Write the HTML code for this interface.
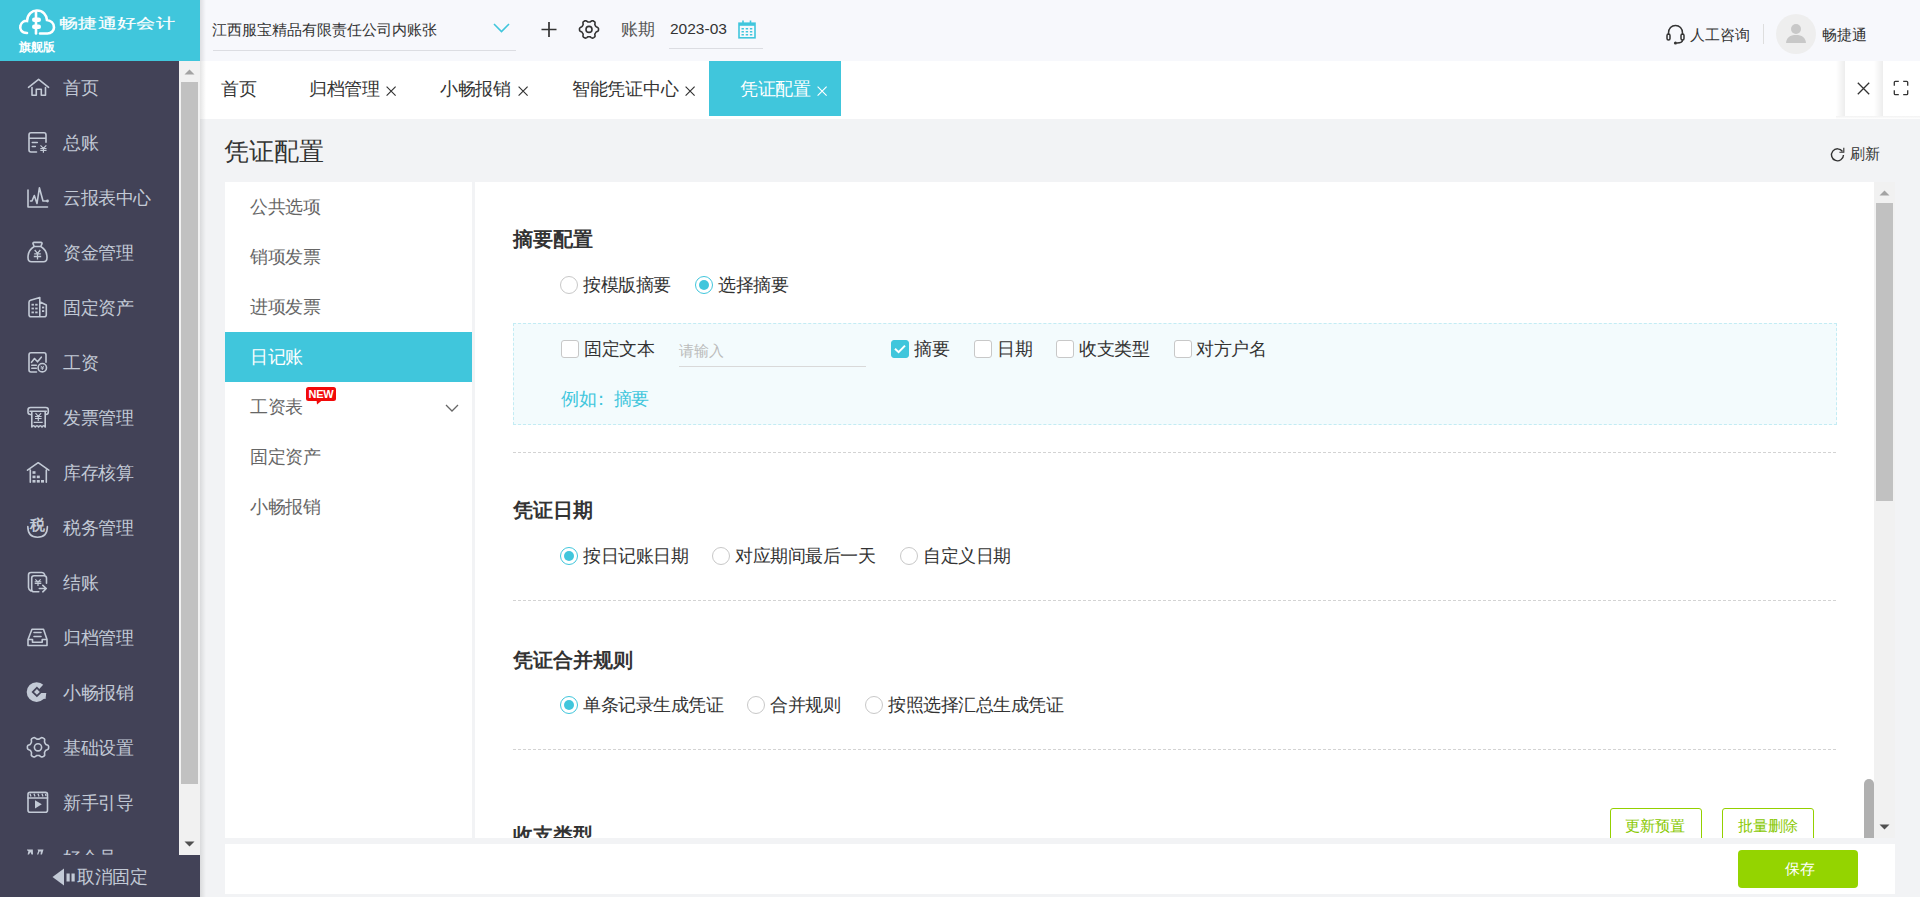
<!DOCTYPE html>
<html><head><meta charset="utf-8">
<style>
*{box-sizing:border-box;margin:0;padding:0}
html,body{width:1920px;height:897px;overflow:hidden}
body{position:relative;background:#f2f3f5;font-family:"Liberation Sans",sans-serif;color:#333}
.a{position:absolute}
.t{position:absolute;white-space:nowrap;line-height:1}
svg{position:absolute;overflow:visible}
/* logo */
#logo{left:0;top:0;width:200px;height:61px;background:#40c6dc}
/* sidebar */
#side{left:0;top:61px;width:200px;height:836px;background:#424257}
.mi{position:absolute;left:63px;font-size:18px;letter-spacing:-0.5px;color:#c3cad6;line-height:1;white-space:nowrap}
.sb{position:absolute;background:#f1f1f1}
.thumb{position:absolute;background:#c1c1c1}
/* header */
#hdr{left:200px;top:0;width:1720px;height:61px;background:#f7f8fc}
#tabs{left:200px;top:61px;width:1720px;height:58px;background:#fff}
.tab{position:absolute;top:80px;font-size:18px;letter-spacing:-0.3px;color:#333;line-height:1;white-space:nowrap}
.x{position:absolute}
.panel{position:absolute;background:#fff}
.nav{position:absolute;left:250px;font-size:18px;letter-spacing:-0.5px;color:#666;line-height:1;white-space:nowrap}
.h2{position:absolute;left:513px;font-size:20px;font-weight:bold;color:#333;line-height:1;white-space:nowrap}
.lbl{position:absolute;font-size:18px;letter-spacing:-0.5px;color:#333;line-height:1;white-space:nowrap}
.radio{position:absolute;width:18px;height:18px;border:1px solid #c8c8c8;border-radius:50%;background:#fff}
.radio.on{border-color:#40c6dc}
.radio.on::after{content:"";position:absolute;left:3px;top:3px;width:10px;height:10px;border-radius:50%;background:#40c6dc}
.cb{position:absolute;width:18px;height:18px;border:1px solid #c8c8c8;border-radius:3px;background:#fff}
.dash{position:absolute;left:513px;width:1324px;height:1px;background:repeating-linear-gradient(90deg,#d3d3d3 0 3px,transparent 3px 5px)}
</style></head><body>
<div id="logo" class="a"></div>
<!-- cloud logo -->
<svg style="left:0;top:0" width="200" height="61" viewBox="0 0 200 61">
  <g fill="none" stroke="#fff" stroke-width="2.6" stroke-linecap="round">
    <path d="M27 33 C21 33 19.5 28.5 20.5 25.5 C21.5 22 24.5 20.5 27 21 C27.5 14 32 10.5 37 10.5 C43 10.5 46.5 15 47 20 C50.5 20.5 54 23 54 27.5 C54 31 51 33.5 47.5 33.5 L40 33.5"/>
    <path d="M36 11 L36 33.5"/>
  </g>
  <g fill="#fff">
    <rect x="32" y="17.5" width="9" height="4.5" rx="2.2"/>
    <rect x="32" y="24.5" width="9" height="4.5" rx="2.2"/>
  </g>
</svg>
<div class="t" style="left:59px;top:17px;font-size:13.5px;-webkit-text-stroke:0.2px #fff;color:#fff;transform-origin:0 0;transform:scaleX(1.36);letter-spacing:0.2px">畅捷通好会计</div>
<div class="t" style="left:19px;top:41px;font-size:12px;color:#fff;font-weight:bold">旗舰版</div>

<div id="side" class="a"></div>
<div class="sb" style="left:179px;top:61px;width:21px;height:794px"></div>
<div class="thumb" style="left:181px;top:82px;width:17px;height:702px"></div>
<svg style="left:184px;top:69px" width="11" height="6"><path d="M0.5 5.5 L5.5 0.5 L10.5 5.5 Z" fill="#a3a3a3"/></svg>
<svg style="left:184px;top:841px" width="11" height="6"><path d="M0.5 0.5 L5.5 5.5 L10.5 0.5 Z" fill="#505050"/></svg>
<div class="mi" style="top:79px">首页</div>
<div class="mi" style="top:134px">总账</div>
<div class="mi" style="top:189px">云报表中心</div>
<div class="mi" style="top:244px">资金管理</div>
<div class="mi" style="top:299px">固定资产</div>
<div class="mi" style="top:354px">工资</div>
<div class="mi" style="top:409px">发票管理</div>
<div class="mi" style="top:464px">库存核算</div>
<div class="mi" style="top:519px">税务管理</div>
<div class="mi" style="top:574px">结账</div>
<div class="mi" style="top:629px">归档管理</div>
<div class="mi" style="top:684px">小畅报销</div>
<div class="mi" style="top:739px">基础设置</div>
<div class="mi" style="top:794px">新手引导</div>
<div class="mi" style="top:849px">好会员</div>

<svg style="left:24px;top:74px" width="30" height="30" viewBox="0 0 30 30"><path fill="none" stroke="#c3cad6" stroke-width="1.6" stroke-linecap="round" stroke-linejoin="round" d="M4.5 13.3 L14.6 5.3 L24.6 13.3 M8 13.5 V21.3 H12.3 V15.3 H17.3 V21.3 H21.5 V13.5"/></svg>
<svg style="left:24px;top:129px" width="30" height="30" viewBox="0 0 30 30"><path fill="none" stroke="#c3cad6" stroke-width="1.6" stroke-linecap="round" stroke-linejoin="round" d="M12.5 23 H7 Q5 23 5 21 V6 Q5 3.8 7 3.8 H20 Q22 3.8 22 6 V13.3 M5 9.3 H22 M8.3 13.5 H13.3 M8.3 17.5 H11.3"/><path fill="none" stroke="#c3cad6" stroke-width="1.2" d="M16.5 16.3 L19.4 19.3 L22.3 16.3 M16.3 19.6 H22.5 M16.3 21.5 H22.5 M19.4 19.3 V23.8"/></svg>
<svg style="left:24px;top:184px" width="30" height="30" viewBox="0 0 30 30"><path fill="none" stroke="#c3cad6" stroke-width="1.6" stroke-linecap="round" stroke-linejoin="round" d="M4 6 V23 H23.5 M6.5 17 H8 L10.3 11.5 L13 19.5 L15.4 3.8 L19 17 H23"/><circle cx="23.5" cy="17" r="1.4" fill="#c3cad6"/></svg>
<svg style="left:24px;top:239px" width="30" height="30" viewBox="0 0 30 30"><path fill="none" stroke="#c3cad6" stroke-width="1.6" stroke-linecap="round" stroke-linejoin="round" d="M10.2 7.5 L9 4.6 Q8.8 3.4 10 3.4 H17 Q18.2 3.4 18 4.6 L16.8 7.5 Z M10.2 7.5 Q4 11 4 18.5 Q4 22.8 7.5 22.8 H19.5 Q23 22.8 23 18.5 Q23 11 16.8 7.5"/><path fill="none" stroke="#c3cad6" stroke-width="1.3" d="M10.7 11 L13.5 14.3 L16.3 11 M10.2 14.8 H16.8 M9.8 17.5 H17.2 M13.5 14.3 V20.5"/></svg>
<svg style="left:24px;top:294px" width="30" height="30" viewBox="0 0 30 30"><path fill="none" stroke="#c3cad6" stroke-width="1.6" stroke-linecap="round" stroke-linejoin="round" d="M15.8 3.6 L6.5 6.3 Q5 6.8 5 8.3 V20.8 Q5 22.8 7 22.8 H20.3 Q22.3 22.8 22.3 20.8 V11 L16.2 8 M15.8 3.6 V22.8"/><g fill="#c3cad6"><rect x="7.5" y="9.8" width="2.4" height="1.8"/><rect x="11.2" y="9.8" width="2.4" height="1.8"/><rect x="7.5" y="13.6" width="2.4" height="1.8"/><rect x="11.2" y="13.6" width="2.4" height="1.8"/><rect x="7.5" y="17.5" width="2.4" height="1.8"/><rect x="11.2" y="17.5" width="2.4" height="1.8"/><rect x="18" y="12.6" width="2.2" height="1.8"/><rect x="18" y="16.2" width="2.2" height="1.8"/></g></svg>
<svg style="left:24px;top:349px" width="30" height="30" viewBox="0 0 30 30"><path fill="none" stroke="#c3cad6" stroke-width="1.6" stroke-linecap="round" stroke-linejoin="round" d="M12.5 23 H7 Q5 23 5 21 V6 Q5 3.8 7 3.8 H20 Q22 3.8 22 6 V13.3 M7.5 13.3 L10.5 9.5 L13.5 12.8 L17.3 8.2 M7.8 16.3 H12.3 M7.8 19.3 H12.3"/><circle cx="18.3" cy="18.7" r="4.2" fill="none" stroke="#c3cad6" stroke-width="1.6" stroke-linecap="round" stroke-linejoin="round"/><path fill="none" stroke="#c3cad6" stroke-width="1" d="M16.7 16.8 L18.3 18.6 L19.9 16.8 M16.6 19 H20 M18.3 18.6 V21"/></svg>
<svg style="left:24px;top:404px" width="30" height="30" viewBox="0 0 30 30"><path fill="none" stroke="#c3cad6" stroke-width="1.6" stroke-linecap="round" stroke-linejoin="round" d="M6.5 10.5 Q4 10.5 4 8 V6 Q4 3.5 6.5 3.5 H21.8 Q24.3 3.5 24.3 6 V8 Q24.3 10.5 21.8 10.5 M6 7.3 H22.3 M7.8 7.5 V23 Q9.5 20.5 11.3 23 Q13 20.5 14.6 23 Q16.3 20.5 18 23 Q19.6 20.5 21.2 23 V7.5"/><path fill="none" stroke="#c3cad6" stroke-width="1.2" d="M11.5 9.2 L14.3 12.3 L17.1 9.2 M11 12.5 H17.6 M11 14.5 H17.6 M14.3 12.3 V17 M9.7 18.4 H18.7"/></svg>
<svg style="left:24px;top:459px" width="30" height="30" viewBox="0 0 30 30"><path fill="none" stroke="#c3cad6" stroke-width="1.6" stroke-linecap="round" stroke-linejoin="round" d="M3.5 11.2 L14.2 3.7 L24.8 11.2 M6.3 11 V23.3 M22.3 11 V23.3"/><g fill="#c3cad6"><rect x="8.5" y="12.2" width="3" height="2.6"/><rect x="8.5" y="16.6" width="3" height="2.6"/><rect x="12.8" y="16.6" width="3" height="2.6"/><rect x="8.5" y="21" width="3" height="2.6"/><rect x="12.8" y="21" width="3" height="2.6"/><rect x="17" y="21" width="3" height="2.6"/></g></svg>
<svg style="left:24px;top:514px" width="30" height="30" viewBox="0 0 30 30"><path fill="none" stroke="#c3cad6" stroke-width="1.6" stroke-linecap="round" stroke-linejoin="round" d="M3.8 12.6 Q3.8 23.3 13.6 23.3 Q23.4 23.3 23.4 12.6"/><text x="13.8" y="16.2" font-size="15" font-weight="bold" text-anchor="middle" fill="#c3cad6" font-family="Liberation Sans">税</text></svg>
<svg style="left:24px;top:569px" width="30" height="30" viewBox="0 0 30 30"><path fill="none" stroke="#c3cad6" stroke-width="1.6" stroke-linecap="round" stroke-linejoin="round" d="M7 22 Q4.5 20.5 4.5 18.5 V6 Q4.5 3.5 7 3.5 H18 Q20 3.5 20.7 5.8 M14.8 22.8 H10 Q7.7 22.8 7.7 20.5 V9 Q7.7 6.7 10 6.7 H20 Q22.5 6.7 22.5 9 V14.2 M15.3 19.5 H22.3 M18.8 16.3 L22.3 19.5 L18.8 22.8"/><path fill="none" stroke="#c3cad6" stroke-width="1.2" d="M11.3 10.3 L14 13 L16.7 10.3 M10.7 12.8 H17.3 M10.7 14.5 H17.3 M14 13 V17"/></svg>
<svg style="left:24px;top:624px" width="30" height="30" viewBox="0 0 30 30"><path fill="none" stroke="#c3cad6" stroke-width="1.6" stroke-linecap="round" stroke-linejoin="round" d="M8 5.3 H19.5 L23 15.5 V21.5 H4 V15.5 Z M4 15.5 H8.5 V18.3 H18.2 V15.5 H23 M10 8.5 H17 M10 12.5 H17"/></svg>
<svg style="left:24px;top:679px" width="30" height="30" viewBox="0 0 30 30"><circle cx="12.6" cy="13.1" r="9.9" fill="#c3cad6"/><path fill="#424257" d="M12.8 12.8 L19.6 5.2 L25 5 L25 14 L17 14 Z"/><rect x="16.8" y="14" width="4.9" height="5.8" fill="#c3cad6"/><path fill="#424257" d="M7.5 12.9 L12.9 7.6 L18.3 12.9 L12.9 18.2 Z"/><path fill="#c3cad6" d="M10 12.9 L12.9 10 L15.8 12.9 L12.9 15.8 Z"/></svg>
<svg style="left:24px;top:734px" width="30" height="30" viewBox="0 0 30 30"><path fill="none" stroke="#c3cad6" stroke-width="1.6" stroke-linecap="round" stroke-linejoin="round" d="M24.6 13.3 L24.6 14.2 L24.2 15.1 L23.1 15.7 L21.9 16.2 L21.4 16.8 L21.1 17.4 L20.7 18.0 L20.5 18.7 L20.6 19.9 L20.7 21.2 L20.1 22.0 L19.3 22.5 L18.5 22.9 L17.5 23.0 L16.4 22.4 L15.5 21.6 L14.7 21.5 L14.0 21.5 L13.3 21.5 L12.5 21.6 L11.6 22.4 L10.5 23.0 L9.5 22.9 L8.7 22.5 L7.9 22.0 L7.3 21.2 L7.4 19.9 L7.5 18.7 L7.3 18.0 L6.9 17.4 L6.6 16.8 L6.1 16.2 L4.9 15.7 L3.8 15.1 L3.4 14.2 L3.4 13.3 L3.4 12.4 L3.8 11.5 L4.9 10.9 L6.1 10.4 L6.6 9.8 L6.9 9.2 L7.3 8.6 L7.5 7.9 L7.4 6.7 L7.3 5.4 L7.9 4.6 L8.7 4.1 L9.5 3.7 L10.5 3.6 L11.6 4.2 L12.5 5.0 L13.3 5.1 L14.0 5.1 L14.7 5.1 L15.5 5.0 L16.4 4.2 L17.5 3.6 L18.5 3.7 L19.3 4.1 L20.1 4.6 L20.7 5.4 L20.6 6.7 L20.5 7.9 L20.7 8.6 L21.1 9.2 L21.4 9.8 L21.9 10.4 L23.1 10.9 L24.2 11.5 L24.6 12.4 Z"/><circle cx="14" cy="13.3" r="3.6" fill="none" stroke="#c3cad6" stroke-width="1.6" stroke-linecap="round" stroke-linejoin="round"/></svg>
<svg style="left:24px;top:789px" width="30" height="30" viewBox="0 0 30 30"><rect x="4" y="3.4" width="19.5" height="19.8" rx="2" fill="none" stroke="#c3cad6" stroke-width="1.6" stroke-linecap="round" stroke-linejoin="round"/><path fill="none" stroke="#c3cad6" stroke-width="1.6" stroke-linecap="round" stroke-linejoin="round" d="M4 9 H23.5"/><path fill="none" stroke="#c3cad6" stroke-width="1.3" d="M6 4.8 L7 7.5 M10 4.8 L11 7.5 M14 4.8 L15 7.5 M18 4.8 L19 7.5 M21.5 4.8 L22 7"/><path fill="#c3cad6" d="M11 11.3 L17.8 15.3 L11 19.5 Z"/></svg>
<svg style="left:24px;top:844px" width="30" height="30" viewBox="0 0 30 30"><path fill="#c3cad6" d="M3 5.5 H8.8 L9 10.5 H7.5 L6.5 8 L5 10.5 H3.6 L4.4 7.3 L3 6.3 Z M13.5 5.5 H19.5 L18 10.5 H16.5 L16.9 7.5 H15.5 L14.3 10.5 H13 L14.2 7 Z"/></svg>
<div class="a" style="left:0;top:855px;width:200px;height:42px;background:#424257"></div>
<svg style="left:52px;top:868px" width="24" height="19"><path d="M0.5 9 L12 0.5 L12 17.5 Z" fill="#c3cad6"/><rect x="14.5" y="5.5" width="3.2" height="8" fill="#c3cad6"/><rect x="19.5" y="5.5" width="3.2" height="8" fill="#c3cad6"/></svg>
<div class="mi" style="left:77px;top:868px">取消固定</div>

<div id="hdr" class="a"></div>
<div class="t" style="left:212px;top:22px;font-size:15px;color:#333">江西服宝精品有限责任公司内账张</div>
<svg style="left:493px;top:23px" width="17" height="10"><path d="M1 1 L8.5 8.5 L16 1" fill="none" stroke="#40c6dc" stroke-width="1.6"/></svg>
<div class="a" style="left:213px;top:50px;width:303px;height:1px;background:#dcdde2"></div>
<svg style="left:541px;top:22px" width="16" height="16"><path d="M8 0 V15 M0.5 7.5 H15.5" stroke="#333" stroke-width="1.7"/></svg>
<svg style="left:578px;top:19px" width="22" height="21" viewBox="0 0 22 21"><path d="M20.5 10.4 L20.5 11.2 L20.1 12.0 L19.2 12.6 L18.2 13.0 L17.7 13.5 L17.4 14.1 L17.1 14.6 L16.8 15.3 L17.0 16.4 L17.0 17.5 L16.4 18.2 L15.8 18.6 L15.0 19.0 L14.2 19.1 L13.2 18.6 L12.3 17.9 L11.6 17.8 L11.0 17.8 L10.4 17.8 L9.7 17.9 L8.8 18.6 L7.8 19.1 L7.0 19.0 L6.3 18.6 L5.6 18.2 L5.0 17.5 L5.0 16.4 L5.2 15.3 L4.9 14.6 L4.6 14.1 L4.3 13.5 L3.8 13.0 L2.8 12.6 L1.9 12.0 L1.5 11.2 L1.5 10.4 L1.5 9.6 L1.9 8.8 L2.8 8.2 L3.8 7.8 L4.3 7.3 L4.6 6.7 L4.9 6.2 L5.2 5.5 L5.0 4.4 L5.0 3.3 L5.6 2.6 L6.2 2.2 L7.0 1.8 L7.8 1.7 L8.8 2.2 L9.7 2.9 L10.4 3.0 L11.0 3.0 L11.6 3.0 L12.3 2.9 L13.2 2.2 L14.2 1.7 L15.0 1.8 L15.7 2.2 L16.4 2.6 L17.0 3.3 L17.0 4.4 L16.8 5.5 L17.1 6.2 L17.4 6.7 L17.7 7.3 L18.2 7.8 L19.2 8.2 L20.1 8.8 L20.5 9.6 Z" fill="none" stroke="#333" stroke-width="1.6" stroke-linejoin="round"/><circle cx="11" cy="10.4" r="3" fill="none" stroke="#333" stroke-width="1.6"/></svg>
<div class="t" style="left:621px;top:21px;font-size:17px;color:#555">账期</div>
<div class="t" style="left:670px;top:21px;font-size:15.5px;color:#333">2023-03</div>
<svg style="left:738px;top:20px" width="19" height="19" viewBox="0 0 19 19"><g fill="none" stroke="#40c6dc" stroke-width="1.6"><rect x="1" y="3.2" width="16" height="14.6"/><path d="M5 0.5 V4.5 M12.5 0.5 V4.5"/></g><rect x="1" y="3.2" width="16" height="2.6" fill="#40c6dc"/><g fill="#40c6dc"><rect x="3.5" y="8" width="2.4" height="1.5"/><rect x="7.7" y="8" width="2.4" height="1.5"/><rect x="11.9" y="8" width="2.4" height="1.5"/><rect x="3.5" y="11" width="2.4" height="1.5"/><rect x="7.7" y="11" width="2.4" height="1.5"/><rect x="11.9" y="11" width="2.4" height="1.5"/><rect x="3.5" y="14" width="2.4" height="1.5"/><rect x="7.7" y="14" width="2.4" height="1.5"/><rect x="11.9" y="14" width="2.4" height="1.5"/></g></svg>
<div class="a" style="left:669px;top:48px;width:94px;height:1px;background:#dcdde2"></div>

<svg style="left:1666px;top:24px" width="19" height="21" viewBox="0 0 19 21"><g fill="none" stroke="#333" stroke-width="1.5"><path d="M2.5 11 V9 C2.5 4.5 5.5 1.5 9.5 1.5 C13.5 1.5 16.5 4.5 16.5 9 V11"/><rect x="1" y="10" width="3" height="6" rx="1.5"/><rect x="15" y="10" width="3" height="6" rx="1.5"/><path d="M16.5 16 C16.5 18 14 19 11 19"/></g><circle cx="9.5" cy="19" r="1.6" fill="#333"/></svg>
<div class="t" style="left:1690px;top:27px;font-size:15px;color:#333">人工咨询</div>
<div class="a" style="left:1763px;top:24px;width:1px;height:20px;background:#dedede"></div>
<div class="a" style="left:1776px;top:14px;width:40px;height:40px;border-radius:50%;background:#eeeeee"></div>
<svg style="left:1786px;top:23px" width="20" height="20" viewBox="0 0 20 20"><circle cx="10" cy="6" r="5" fill="#c8c8c8"/><path d="M0 20 C0.5 14.5 4 12 10 12 C16 12 19.5 14.5 20 20 Z" fill="#c8c8c8"/></svg>
<div class="t" style="left:1822px;top:27px;font-size:15px;color:#333">畅捷通</div>

<div id="tabs" class="a"></div>
<div class="tab" style="left:221px">首页</div>
<div class="tab" style="left:309px">归档管理</div>
<svg class="x" style="left:386px;top:86px" width="10" height="10"><path d="M0.6 0.6 L9.6 9.6 M9.6 0.6 L0.6 9.6" stroke="#333" stroke-width="1.15"/></svg>
<div class="tab" style="left:440px">小畅报销</div>
<svg class="x" style="left:518px;top:86px" width="10" height="10"><path d="M0.6 0.6 L9.6 9.6 M9.6 0.6 L0.6 9.6" stroke="#333" stroke-width="1.15"/></svg>
<div class="tab" style="left:572px">智能凭证中心</div>
<svg class="x" style="left:685px;top:86px" width="10" height="10"><path d="M0.6 0.6 L9.6 9.6 M9.6 0.6 L0.6 9.6" stroke="#333" stroke-width="1.15"/></svg>
<div class="a" style="left:709px;top:61px;width:132px;height:55px;background:#40c6dc"></div>
<div class="tab" style="left:740px;color:#fff">凭证配置</div>
<svg class="x" style="left:817px;top:86px" width="10" height="10"><path d="M0.6 0.6 L9.6 9.6 M9.6 0.6 L0.6 9.6" stroke="#fff" stroke-width="1.15"/></svg>
<div class="a" style="left:1836px;top:61px;width:9px;height:55px;background:linear-gradient(90deg,rgba(0,0,0,0),rgba(0,0,0,0.07))"></div>
<div class="a" style="left:1845px;top:61px;width:38px;height:55px;background:#fff"></div>
<div class="a" style="left:1874px;top:61px;width:9px;height:55px;background:linear-gradient(90deg,rgba(0,0,0,0),rgba(0,0,0,0.07))"></div>
<div class="a" style="left:1883px;top:61px;width:37px;height:55px;background:#fff"></div>
<div class="a" style="left:1836px;top:116px;width:84px;height:3px;background:linear-gradient(180deg,rgba(0,0,0,0.05),rgba(0,0,0,0))"></div>
<svg style="left:1857px;top:82px" width="13" height="13"><path d="M0.8 0.8 L12.2 12.2 M12.2 0.8 L0.8 12.2" stroke="#333" stroke-width="1.3"/></svg>
<svg style="left:1893px;top:80px" width="16" height="16" viewBox="0 0 16 16"><path d="M1.3 5.8 V2.3 Q1.3 1.3 2.3 1.3 H5.8 M10.2 1.3 H13.7 Q14.7 1.3 14.7 2.3 V5.8 M14.7 10.2 V13.7 Q14.7 14.7 13.7 14.7 H10.2 M5.8 14.7 H2.3 Q1.3 14.7 1.3 13.7 V10.2" fill="none" stroke="#333" stroke-width="1.3"/></svg>

<div class="t" style="left:224px;top:139px;font-size:25px;color:#333">凭证配置</div>
<svg style="left:1830px;top:147px" width="15" height="15" viewBox="0 0 15 15"><path d="M12.5 4.5 A6 6 0 1 0 13.5 8" fill="none" stroke="#333" stroke-width="1.4"/><path d="M13.8 0.8 V5.2 H9.4" fill="none" stroke="#333" stroke-width="1.15"/></svg>
<div class="t" style="left:1850px;top:146px;font-size:15px;color:#333">刷新</div>

<div class="panel" style="left:225px;top:182px;width:247px;height:656px"></div>
<div class="panel" style="left:475px;top:182px;width:1399px;height:656px"></div>
<div class="nav" style="top:198px">公共选项</div>
<div class="nav" style="top:248px">销项发票</div>
<div class="nav" style="top:298px">进项发票</div>
<div class="nav" style="top:398px">工资表</div>
<div class="nav" style="top:448px">固定资产</div>
<div class="nav" style="top:498px">小畅报销</div>

<div class="a" style="left:225px;top:332px;width:247px;height:50px;background:#40c6dc"></div>
<div class="nav" style="left:250px;top:348px;color:#fff">日记账</div>
<svg style="left:306px;top:387px" width="31" height="18" viewBox="0 0 31 18"><rect x="0" y="0" width="30" height="14" rx="2.5" fill="#f20a0a"/><path d="M10.5 13 L16.5 13 L11 17.5 Z" fill="#f20a0a"/><text x="15" y="11" font-family="Liberation Sans" font-weight="bold" font-size="11" fill="#fff" text-anchor="middle" letter-spacing="-0.3">NEW</text></svg>
<svg style="left:445px;top:404px" width="14" height="9"><path d="M1 1 L7 7 L13 1" fill="none" stroke="#666" stroke-width="1.3"/></svg>

<div class="h2" style="top:229px">摘要配置</div>
<div class="radio" style="left:560px;top:276px"></div>
<div class="lbl" style="left:583px;top:276px">按模版摘要</div>
<div class="radio on" style="left:695px;top:276px"></div>
<div class="lbl" style="left:718px;top:276px">选择摘要</div>

<div class="a" style="left:513px;top:323px;width:1324px;height:102px;background:#f3fbfd;border:1px dashed #c3ecf4"></div>
<div class="cb" style="left:561px;top:340px"></div>
<div class="lbl" style="left:584px;top:340px">固定文本</div>
<div class="t" style="left:679px;top:343px;font-size:15px;color:#bbb">请输入</div>
<div class="a" style="left:679px;top:366px;width:187px;height:1px;background:#d9d9d9"></div>
<div class="cb" style="left:891px;top:340px;background:#40c6dc;border-color:#40c6dc"></div>
<svg style="left:893px;top:343px" width="14" height="12"><path d="M2 5.8 L5.6 9.2 L12 2.6" fill="none" stroke="#fff" stroke-width="2"/></svg>
<div class="lbl" style="left:914px;top:340px">摘要</div>
<div class="cb" style="left:974px;top:340px"></div>
<div class="lbl" style="left:997px;top:340px">日期</div>
<div class="cb" style="left:1056px;top:340px"></div>
<div class="lbl" style="left:1079px;top:340px">收支类型</div>
<div class="cb" style="left:1174px;top:340px"></div>
<div class="lbl" style="left:1196px;top:340px">对方户名</div>
<div class="lbl" style="left:561px;top:390px;color:#40c6dc">例如<span style="position:relative;left:-4.5px">：</span>摘要</div>

<div class="dash" style="top:452px"></div>
<div class="h2" style="top:500px">凭证日期</div>
<div class="radio on" style="left:560px;top:547px"></div>
<div class="lbl" style="left:583px;top:547px">按日记账日期</div>
<div class="radio" style="left:712px;top:547px"></div>
<div class="lbl" style="left:735px;top:547px">对应期间最后一天</div>
<div class="radio" style="left:900px;top:547px"></div>
<div class="lbl" style="left:923px;top:547px">自定义日期</div>

<div class="dash" style="top:600px"></div>
<div class="h2" style="top:650px">凭证合并规则</div>
<div class="radio on" style="left:560px;top:696px"></div>
<div class="lbl" style="left:583px;top:696px">单条记录生成凭证</div>
<div class="radio" style="left:747px;top:696px"></div>
<div class="lbl" style="left:770px;top:696px">合并规则</div>
<div class="radio" style="left:865px;top:696px"></div>
<div class="lbl" style="left:888px;top:696px">按照选择汇总生成凭证</div>
<div class="dash" style="top:749px"></div>

<div class="h2" style="top:825px">收支类型</div>
<div class="a" style="left:1610px;top:808px;width:92px;height:40px;border:1px solid #94d000;border-radius:3px;background:#fff"></div>
<div class="t" style="left:1625px;top:818px;font-size:15px;color:#88c800">更新预置</div>
<div class="a" style="left:1722px;top:808px;width:92px;height:40px;border:1px solid #94d000;border-radius:3px;background:#fff"></div>
<div class="t" style="left:1738px;top:818px;font-size:15px;color:#88c800">批量删除</div>

<div class="sb" style="left:1874px;top:182px;width:21px;height:656px"></div>
<div class="thumb" style="left:1876px;top:203px;width:17px;height:298px"></div>
<svg style="left:1879px;top:190px" width="11" height="6"><path d="M0.5 5.5 L5.5 0.5 L10.5 5.5 Z" fill="#a3a3a3"/></svg>
<svg style="left:1879px;top:824px" width="11" height="6"><path d="M0.5 0.5 L5.5 5.5 L10.5 0.5 Z" fill="#505050"/></svg>
<div class="a" style="left:1864px;top:779px;width:10px;height:70px;border-radius:5px;background:#b0b0b0"></div>

<div class="a" style="left:200px;top:838px;width:1720px;height:6px;background:#f2f3f5"></div>
<div class="a" style="left:225px;top:844px;width:1670px;height:50px;background:#fff"></div>
<div class="a" style="left:1738px;top:850px;width:120px;height:38px;border-radius:4px;background:#94d400"></div>
<div class="t" style="left:1785px;top:861px;font-size:15px;color:#fff">保存</div>
<div class="a" style="left:200px;top:0;width:6px;height:897px;background:linear-gradient(90deg,rgba(0,0,0,0.10),rgba(0,0,0,0))"></div>
</body></html>
